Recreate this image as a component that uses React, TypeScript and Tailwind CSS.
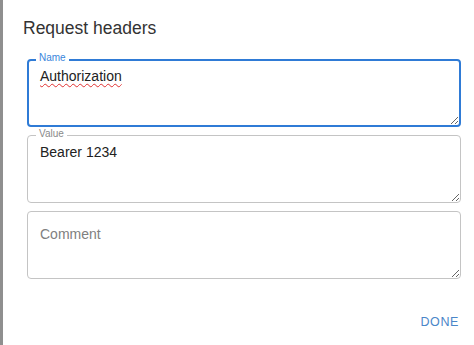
import { useState } from "react";

interface FieldProps {
  label: string;
  value: string;
  focused?: boolean;
  spellError?: boolean;
}

function OutlinedArea({ label, value, focused, spellError }: FieldProps) {
  const [text, setText] = useState(value);
  const hasValue = text.length > 0;
  return (
    <div className="relative">
      <textarea
        value={text}
        onChange={(e) => setText(e.target.value)}
        placeholder={hasValue ? "" : label}
        spellCheck={false}
        className={`block w-full h-[68px] rounded-[4px] bg-white text-[14px] leading-5 text-[#222] placeholder:text-[#808080] outline-none resize-y ${
          focused
            ? "border-2 border-[#2f7bd6] px-[11px] pt-[5px]"
            : hasValue
            ? "border border-[#c4c4c4] px-3 pt-[6px]"
            : "border border-[#c4c4c4] px-3 pt-[12px]"
        } ${spellError ? "underline decoration-wavy decoration-[#e03030] decoration-1 underline-offset-2" : ""}`}
      />
      {hasValue && (
        <span
          className={`absolute left-[9px] -top-[7px] bg-white px-[3px] text-[10px] leading-3 ${
            focused ? "text-[#3a86dc]" : "text-[#8a8a8a]"
          }`}
        >
          {label}
        </span>
      )}
    </div>
  );
}

export default function App() {
  return (
    <div className="flex h-[345px] w-[474px] bg-white font-['Liberation_Sans',Arial,sans-serif]">
      <div className="w-[3px] bg-[#8f8f8f]" />
      <div className="flex flex-1 flex-col pl-[20px] pr-[13px]">
        <h2 className="pt-[16px] text-[17.5px] leading-6 text-[#333]">
          Request headers
        </h2>
        <div className="mt-[19px] flex flex-col gap-[8px] pl-[4px]">
          <OutlinedArea label="Name" value="Authorization" focused spellError />
          <OutlinedArea label="Value" value="Bearer 1234" />
          <OutlinedArea label="Comment" value="" />
        </div>
        <div className="mt-[34px] flex justify-end">
          <button className="px-[2px] text-[12.5px] tracking-[0.6px] text-[#4a86c8]">
            DONE
          </button>
        </div>
      </div>
    </div>
  );
}
